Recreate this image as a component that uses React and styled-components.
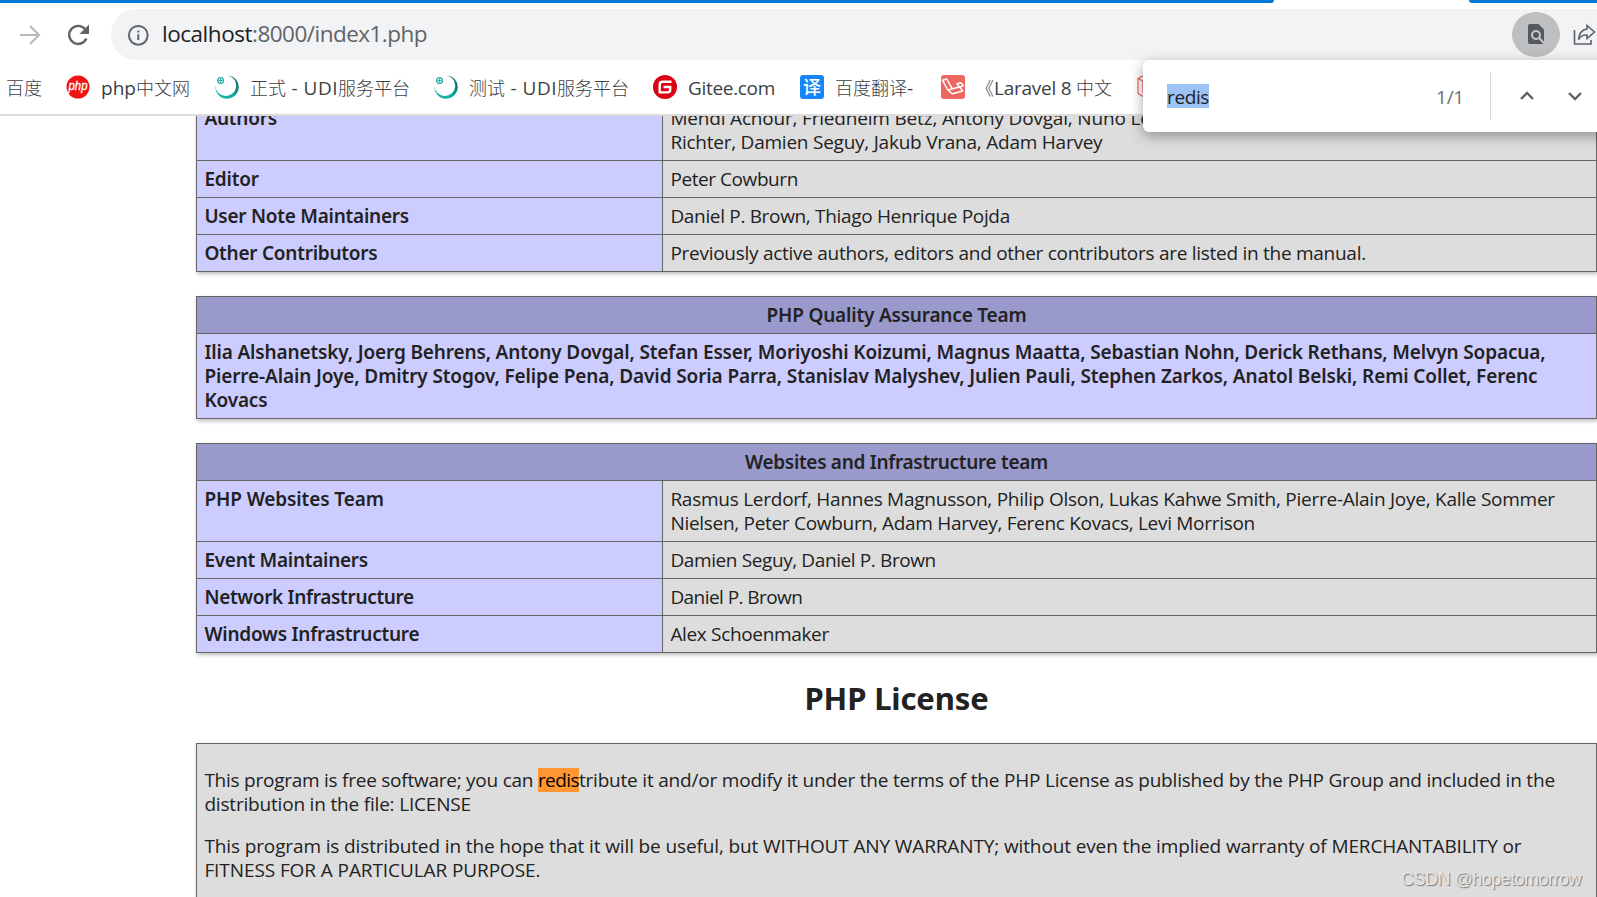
import React, { useLayoutEffect, useRef, useState } from "react";
import styled, { createGlobalStyle } from "styled-components";

const GlobalStyle = createGlobalStyle`
  * {
    box-sizing: border-box;
  }
  body {
    margin: 0;
    background: #fff;
    color: #222;
    font-family: "Open Sans", "Noto Sans CJK SC", sans-serif;
    overflow: hidden;
  }
`;

const Window = styled.div`
  display: flex;
  flex-direction: column;
  width: 1597px;
  height: 897px;
  overflow: hidden;
`;

const TabStrip = styled.div`
  display: flex;
  justify-content: space-between;
  height: 3px;
  flex: none;
`;

const TabEdge = styled.div`
  width: ${(p) => p.$width}px;
  background: #0078d7;
  border-radius: ${(p) => (p.$side === "left" ? "0 0 4px 0" : "0 0 0 4px")};
`;

const Toolbar = styled.div`
  display: flex;
  height: 57px;
  padding: 6px 0 0 18px;
  flex: none;
`;

const NavButtons = styled.div`
  display: flex;
  align-items: center;
  gap: 24px;
  width: 93px;
  height: 51px;
`;

const AddressBar = styled.div`
  display: flex;
  align-items: center;
  flex: 1;
  height: 51px;
  padding: 0 1px 0 15px;
  background: #f1f3f4;
  border-radius: 26px 0 0 26px;
`;

const Url = styled.div`
  flex: 1;
  margin: -1px 0 0 12px;
  font-size: 22.5px;
  line-height: 30px;
  color: #202124;
`;

const UrlRest = styled.span`
  color: #5f6368;
`;

const FindButton = styled.div`
  display: flex;
  align-items: center;
  justify-content: center;
  width: 48px;
  height: 45px;
  margin: 0 13px 1px 0;
  border-radius: 50%;
  background: #bdbfc1;
`;

const Bookmarks = styled.div`
  display: flex;
  align-items: center;
  height: 56px;
  padding-left: 6px;
  border-bottom: 2px solid #dcdcdc;
  flex: none;
`;

const Bookmark = styled.div`
  display: flex;
  align-items: center;
  gap: 11px;
  width: ${(p) => p.$width}px;
  height: 54px;
  flex: none;
  font-size: 18px;
  line-height: 24px;
  color: #3c4043;
`;

const BookmarkText = styled.span`
  padding-top: 2px;
  font-weight: 300;
`;

const Latin = styled.span`
  font-size: 19px;
  font-weight: 400;
`;

const Page = styled.main`
  flex: 1;
  padding-left: 196px;
  overflow: hidden;
`;

const InfoTable = styled.table`
  width: 1401px;
  margin: ${(p) => p.$top || 0}px 0 24px;
  border-collapse: collapse;
  table-layout: fixed;
  font-size: 19px;
  line-height: 24px;
  box-shadow: 1px 2px 4px #bbb;
`;

const HeadCell = styled.th`
  padding: 6px 8px;
  border: 1px solid #666;
  background: #9999cc;
  font-family: "Noto Sans", sans-serif;
  font-weight: 600;
  text-align: center;
`;

const LabelCell = styled.td`
  width: 466px;
  padding: 6px 8px 6px 7.4px;
  border: 1px solid #666;
  background: #ccccff;
  font-family: "Noto Sans", sans-serif;
  font-weight: 600;
  vertical-align: top;
`;

const ValueCell = styled.td`
  padding: 6px 8px 6px 7.4px;
  border: 1px solid #666;
  background: #ddd;
  vertical-align: top;
`;

const Title = styled.h1`
  margin: 0;
  padding: 1px 0 25px;
  font-family: "Noto Sans", sans-serif;
  font-size: 31px;
  line-height: 40px;
  font-weight: 700;
  text-align: center;
`;

const Paragraph = styled.p`
  margin: 18px 0;
`;

const Line = styled.span`
  display: block;
  height: 24px;
  white-space: nowrap;
`;

const Run = styled.span`
  white-space: nowrap;
`;

const Match = styled.mark`
  display: inline-block;
  height: 24px;
  background: #ff9632;
  color: #000;
  vertical-align: top;
`;

const FindBar = styled.div`
  position: absolute;
  left: 1143px;
  top: 60px;
  display: flex;
  align-items: center;
  width: 470px;
  height: 72px;
  padding-left: 24px;
  border-radius: 6px;
  background: #fff;
  box-shadow: 0 4px 14px rgba(0, 0, 0, 0.35);
`;

const FindQuery = styled.span`
  height: 24px;
  background: #9dc2f5;
  color: #202124;
  font-size: 19px;
  line-height: 26px;
`;

const FindCount = styled.span`
  width: 28px;
  margin-left: 227px;
  padding-top: 2px;
  color: #6b6f73;
  font-size: 19px;
`;

const Divider = styled.div`
  width: 1px;
  height: 48px;
  margin: 0 24px 0 26px;
  background: #d4d6d9;
`;

const Arrow = styled.svg`
  flex: none;
  margin-right: 24px;
`;

const Watermark = styled.div`
  position: absolute;
  left: 1401px;
  top: 867px;
  font-family: "Liberation Sans", sans-serif;
  font-size: 18px;
  line-height: 24px;
  color: #e6e6e6;
  text-shadow: 1px 1px 1px #777;
`;

// Spreads the letters of a run so that it takes exactly `width` pixels.
function Fit({ width, children }) {
  const ref = useRef(null);
  const [spacing, setSpacing] = useState(0);

  useLayoutEffect(() => {
    const el = ref.current;
    const natural = el.getBoundingClientRect().width;
    setSpacing((width - natural) / el.textContent.length);
  }, [width]);

  return (
    <Run ref={ref} style={{ letterSpacing: `${spacing}px` }}>
      {children}
    </Run>
  );
}

const Lines = ({ items }) =>
  items.map(([text, width]) => (
    <Line key={text}>
      <Fit width={width}>{text}</Fit>
    </Line>
  ));

const docsTeam = [
  { label: ["Editor", 54.5], value: [["Peter Cowburn", 127.5]] },
  { label: ["User Note Maintainers", 204.5], value: [["Daniel P. Brown, Thiago Henrique Pojda", 339.5]] },
  {
    label: ["Other Contributors", 173],
    value: [["Previously active authors, editors and other contributors are listed in the manual.", 695.5]],
  },
];

const qaTeam = [
  ["Ilia Alshanetsky, Joerg Behrens, Antony Dovgal, Stefan Esser, Moriyoshi Koizumi, Magnus Maatta, Sebastian Nohn, Derick Rethans, Melvyn Sopacua,", 1341],
  ["Pierre-Alain Joye, Dmitry Stogov, Felipe Pena, David Soria Parra, Stanislav Malyshev, Julien Pauli, Stephen Zarkos, Anatol Belski, Remi Collet, Ferenc", 1333],
  ["Kovacs", 63],
];

const webTeam = [
  {
    label: ["PHP Websites Team", 179.5],
    value: [
      ["Rasmus Lerdorf, Hannes Magnusson, Philip Olson, Lukas Kahwe Smith, Pierre-Alain Joye, Kalle Sommer", 884.5],
      ["Nielsen, Peter Cowburn, Adam Harvey, Ferenc Kovacs, Levi Morrison", 584.5],
    ],
  },
  { label: ["Event Maintainers", 163.5], value: [["Damien Seguy, Daniel P. Brown", 265.5]] },
  { label: ["Network Infrastructure", 209.5], value: [["Daniel P. Brown", 132]] },
  { label: ["Windows Infrastructure", 215], value: [["Alex Schoenmaker", 158.5]] },
];

const Rows = ({ rows }) =>
  rows.map((row) => (
    <tr key={row.label[0]}>
      <LabelCell><Lines items={[row.label]} /></LabelCell>
      <ValueCell><Lines items={row.value} /></ValueCell>
    </tr>
  ));

const Columns = () => (
  <colgroup>
    <col width="466" />
    <col />
  </colgroup>
);

const ForwardIcon = () => (
  <svg width="24" height="24" viewBox="0 0 24 24" fill="none" stroke="#b8babc" strokeWidth="2.2">
    <path d="M2 12H21M12 3L21 12L12 21" />
  </svg>
);

const ReloadIcon = () => (
  <svg width="24" height="24" viewBox="0 0 24 24">
    <path d="M20.4 15.6A9 9 0 1 1 19 6" fill="none" stroke="#5f6368" strokeWidth="2.4" />
    <path d="M23 1.5V11H13.5Z" fill="#5f6368" />
  </svg>
);

const InfoIcon = () => (
  <svg width="24" height="24" viewBox="0 0 24 24">
    <circle cx="12.3" cy="12.3" r="9.4" fill="none" stroke="#5f6368" strokeWidth="2" />
    <path d="M11.3 11.3H13.3V17H11.3ZM11.3 7.5H13.3V9.5H11.3Z" fill="#5f6368" />
  </svg>
);

const FindPageIcon = () => (
  <svg width="18" height="22" viewBox="0 0 18 22">
    <path d="M3 1H11.5L17 6.5V19Q17 21 15 21H3Q1 21 1 19V3Q1 1 3 1Z" fill="#55595d" />
    <circle cx="9" cy="12" r="4" fill="none" stroke="#c8cacc" strokeWidth="2" />
    <path d="M12 15L17 20" stroke="#c8cacc" strokeWidth="2" />
  </svg>
);

const ShareIcon = () => (
  <svg width="23" height="24" viewBox="0 0 23 24" fill="none" stroke="#5f6368" strokeWidth="1.6">
    <path d="M1.5 7V21H18V17" />
    <path d="M14 2.5L21.5 9L14 15.5V12Q8.5 11.5 5.5 16.5Q6.5 7 14 6Z" />
  </svg>
);

const PhpIcon = () => (
  <svg width="24" height="24" viewBox="0 0 24 24">
    <circle cx="12" cy="12" r="11.5" fill="#f01414" />
    <text x="12" y="15" textAnchor="middle" fontSize="13" fontStyle="italic" fontFamily="Liberation Sans" fill="#fff" stroke="#fff" strokeWidth=".3" textLength="19" lengthAdjust="spacingAndGlyphs">php</text>
  </svg>
);

const UdiIcon = () => (
  <svg width="24" height="24" viewBox="0 0 24 24">
    <defs>
      <linearGradient id="ring" x1="0" y1="1" x2="1" y2="0">
        <stop offset="0.4" stopColor="#16b0a5" />
        <stop offset="0.8" stopColor="#087468" />
      </linearGradient>
    </defs>
    <path d="M13 0.4A11.7 11.7 0 1 1 0.4 11A10.4 10.4 0 1 0 13 0.4Z" fill="url(#ring)" />
    <circle cx="5.5" cy="5.5" r="2.9" fill="none" stroke="#18aaa0" strokeWidth="1.3" />
    <path d="M5.5 3.8V7.2M3.8 5.5H7.2" stroke="#18aaa0" />
  </svg>
);

const GiteeIcon = () => (
  <svg width="24" height="24" viewBox="0 0 24 24">
    <circle cx="12" cy="12" r="12" fill="#dc0014" />
    <path d="M18.5 6.8H9.5Q6.7 6.8 6.7 9.6V17.4H14.6Q17.2 17.4 17.2 14.8V12H10.5" fill="none" stroke="#fff" strokeWidth="2.4" />
  </svg>
);

const TranslateIcon = () => (
  <svg width="24" height="24" viewBox="0 0 24 24">
    <rect width="24" height="24" rx="3" fill="#1687f8" />
    <text x="12" y="18.5" textAnchor="middle" fontSize="18" fontFamily="Noto Sans CJK SC" fontWeight="500" fill="#fff">译</text>
  </svg>
);

const LaravelIcon = () => (
  <svg width="24" height="24" viewBox="0 0 24 24">
    <rect width="24" height="24" rx="3" fill="#ef6560" />
    <path
      d="M1.5 5.2L5.8 4L11.3 13.8L6.8 15ZM6.8 15L11.5 18.8L21.8 16L18.6 12L11.3 13.8M18.6 12L16 8.8L19.8 7.8L22.3 10.8L18.6 12"
      fill="none"
      stroke="#fff"
      strokeWidth="1.5"
      strokeLinejoin="round"
    />
  </svg>
);

const CubeIcon = () => (
  <svg width="24" height="24" viewBox="0 0 24 24" fill="none" stroke="#f0625c" strokeWidth="1.2">
    <path d="M1 3.5L6 1L12 3.5V19L7 22L1 18.5ZM1 3.5L6 6L12 3.5M6 6V18" />
  </svg>
);

const App = () => (
  <>
    <GlobalStyle />
    <Window>
      <TabStrip>
        <TabEdge $width={1274} $side="left" />
        <TabEdge $width={128} $side="right" />
      </TabStrip>
      <Toolbar>
        <NavButtons>
          <ForwardIcon />
          <ReloadIcon />
        </NavButtons>
        <AddressBar>
          <InfoIcon />
          <Url>
            <Fit width={90}>localhost</Fit>
            <UrlRest><Fit width={175}>:8000/index1.php</Fit></UrlRest>
          </Url>
          <FindButton><FindPageIcon /></FindButton>
          <ShareIcon />
        </AddressBar>
      </Toolbar>
      <Bookmarks>
        <Bookmark $width={60}><BookmarkText>百度</BookmarkText></Bookmark>
        <Bookmark $width={149}>
          <PhpIcon />
          <BookmarkText><Latin><Fit width={35}>php</Fit></Latin>中文网</BookmarkText>
        </Bookmark>
        <Bookmark $width={219}>
          <UdiIcon />
          <BookmarkText>正式<Latin><Fit width={52}> - UDI</Fit></Latin>服务平台</BookmarkText>
        </Bookmark>
        <Bookmark $width={219}>
          <UdiIcon />
          <BookmarkText>测试<Latin><Fit width={52}> - UDI</Fit></Latin>服务平台</BookmarkText>
        </Bookmark>
        <Bookmark $width={147}>
          <GiteeIcon />
          <BookmarkText><Latin><Fit width={87}>Gitee.com</Fit></Latin></BookmarkText>
        </Bookmark>
        <Bookmark $width={141}>
          <TranslateIcon />
          <BookmarkText>百度翻译<Latin>-</Latin></BookmarkText>
        </Bookmark>
        <Bookmark $width={196}>
          <LaravelIcon />
          <BookmarkText>《<Latin><Fit width={82}>Laravel 8 </Fit></Latin>中文</BookmarkText>
        </Bookmark>
        <Bookmark $width={40}><CubeIcon /></Bookmark>
      </Bookmarks>
      <Page>
        <InfoTable $top={-17}>
          <Columns />
          <tbody>
            <tr>
              <LabelCell><Lines items={[["Authors", 72.5]]} /></LabelCell>
              <ValueCell>
                <Line>
                  <Fit width={460}>Mehdi Achour, Friedhelm Betz, Antony Dovgal, Nuno </Fit>
                  Lopes, Hannes Magnusson, Philip Olson, Georg
                </Line>
                <Lines items={[["Richter, Damien Seguy, Jakub Vrana, Adam Harvey", 432]]} />
              </ValueCell>
            </tr>
            <Rows rows={docsTeam} />
          </tbody>
        </InfoTable>
        <InfoTable>
          <tbody>
            <tr>
              <HeadCell><Lines items={[["PHP Quality Assurance Team", 260]]} /></HeadCell>
            </tr>
            <tr>
              <LabelCell><Lines items={qaTeam} /></LabelCell>
            </tr>
          </tbody>
        </InfoTable>
        <InfoTable>
          <Columns />
          <tbody>
            <tr>
              <HeadCell colSpan="2"><Lines items={[["Websites and Infrastructure team", 303]]} /></HeadCell>
            </tr>
            <Rows rows={webTeam} />
          </tbody>
        </InfoTable>
        <Title><Fit width={184}>PHP License</Fit></Title>
        <InfoTable>
          <tbody>
            <tr>
              <ValueCell>
                <Paragraph>
                  <Line>
                    <Fit width={333.5}>This program is free software; you can </Fit>
                    <Match><Fit width={41}>redis</Fit></Match>
                    <Fit width={976}>tribute it and/or modify it under the terms of the PHP License as published by the PHP Group and included in the</Fit>
                  </Line>
                  <Lines items={[["distribution in the file: LICENSE", 266.5]]} />
                </Paragraph>
                <Paragraph>
                  <Lines
                    items={[
                      ["This program is distributed in the hope that it will be useful, but WITHOUT ANY WARRANTY; without even the implied warranty of MERCHANTABILITY or", 1317],
                      ["FITNESS FOR A PARTICULAR PURPOSE.", 336],
                    ]}
                  />
                </Paragraph>
              </ValueCell>
            </tr>
          </tbody>
        </InfoTable>
      </Page>
    </Window>
    <FindBar>
      <FindQuery><Fit width={42}>redis</Fit></FindQuery>
      <FindCount><Fit width={28}>1/1</Fit></FindCount>
      <Divider />
      <Arrow width="24" height="24" viewBox="0 0 24 24" fill="none" stroke="#5f6368" strokeWidth="2.4">
        <path d="M6 15L12 9L18 15" />
      </Arrow>
      <Arrow width="24" height="24" viewBox="0 0 24 24" fill="none" stroke="#5f6368" strokeWidth="2.4">
        <path d="M6 9L12 15L18 9" />
      </Arrow>
    </FindBar>
    <Watermark><Fit width={180}>CSDN @hopetomorrow</Fit></Watermark>
  </>
);

export default App;
